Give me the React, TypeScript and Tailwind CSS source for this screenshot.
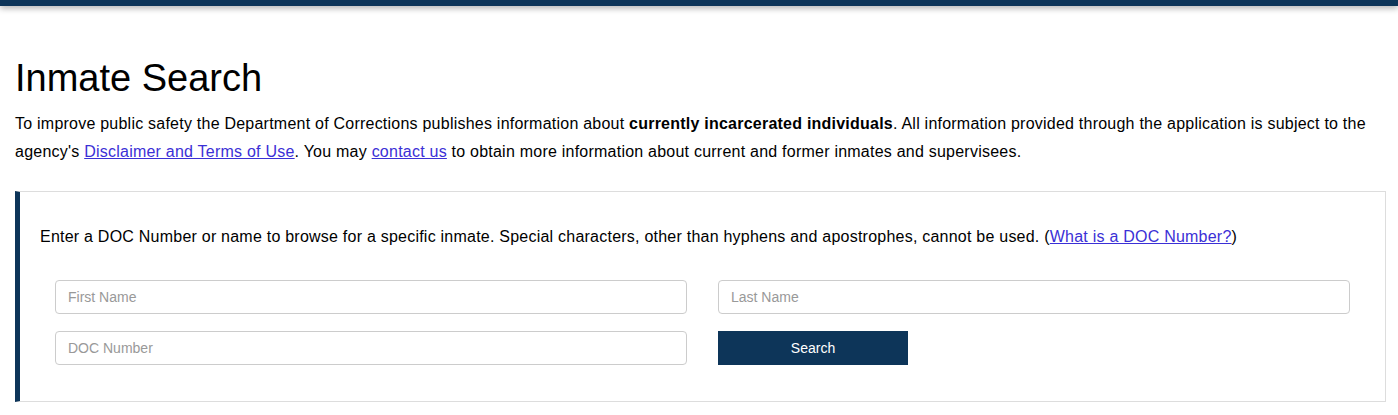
import React from 'react';

const font = "font-['Liberation_Sans',Arial,sans-serif]";

export default function App() {
  return (
    <div className={`min-h-[415px] bg-white text-black ${font}`}>
      <div className="h-[6px] bg-[#0d3559] shadow-[0_2px_6px_rgba(0,0,0,0.35)]" />

      <main className="pl-[15px] pr-[12px]">
        <h1 className="mt-[51px] text-[38px] leading-[42px] font-normal">
          Inmate Search
        </h1>

        <p className="mt-[11px] text-[16px] leading-[28px] tracking-[0.23px]">
          To improve public safety the Department of Corrections publishes
          information about <strong>currently incarcerated individuals</strong>.
          All information provided through the application is subject to the
          agency's{' '}
          <a href="#" className="text-[#3b30d6] underline">
            Disclaimer and Terms of Use
          </a>
          . You may{' '}
          <a href="#" className="text-[#3b30d6] underline">
            contact us
          </a>{' '}
          to obtain more information about current and former inmates and
          supervisees.
        </p>

        <section className="mt-[25px] border border-l-[5px] border-[#dddddd] border-l-[#0d3559] pt-[33px] pb-[36px]">
          <p className="pl-[20px] text-[16px] leading-[24px] tracking-[0.23px]">
            Enter a DOC Number or name to browse for a specific inmate. Special
            characters, other than hyphens and apostrophes, cannot be used. (
            <a href="#" className="text-[#3b30d6] underline">
              What is a DOC Number?
            </a>
            )
          </p>

          <form className="mt-[31px] grid grid-cols-2 gap-x-[31px] gap-y-[17px] px-[35px]">
            <Field placeholder="First Name" />
            <Field placeholder="Last Name" />
            <Field placeholder="DOC Number" />
            <div>
              <button
                type="button"
                className="h-[34px] w-[190px] bg-[#0d3559] text-[14px] text-white"
              >
                Search
              </button>
            </div>
          </form>
        </section>
      </main>
    </div>
  );
}

function Field({ placeholder }: { placeholder: string }) {
  return (
    <input
      type="text"
      placeholder={placeholder}
      className="h-[34px] w-full rounded-[4px] border border-[#cccccc] bg-white px-[12px] text-[14px] text-[#555] placeholder:text-[#999] outline-none"
    />
  );
}
